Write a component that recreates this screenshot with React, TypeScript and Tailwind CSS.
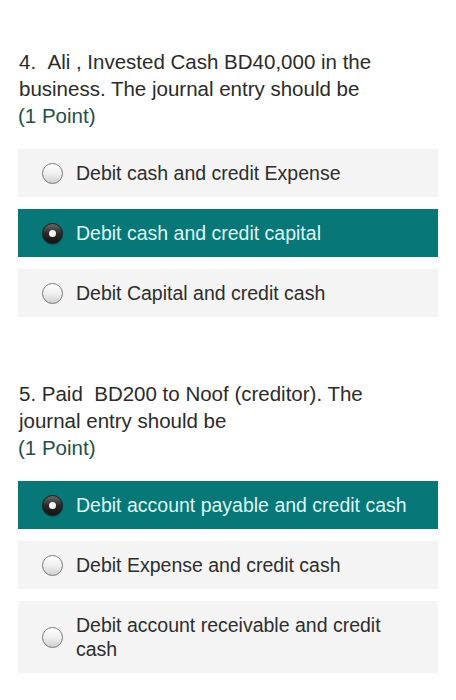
const questions = [
  {
    title: "4.\u00a0\u00a0Ali , Invested Cash BD40,000 in the business. The journal entry should be",
    options: [
      { label: "Debit cash and credit Expense", selected: false },
      { label: "Debit cash and credit capital", selected: true },
      { label: "Debit Capital and credit cash", selected: false },
    ],
  },
  {
    title: "5. Paid\u00a0\u00a0BD200 to Noof (creditor). The journal entry should be",
    options: [
      { label: "Debit account payable and credit cash", selected: true },
      { label: "Debit Expense and credit cash", selected: false },
      { label: "Debit account receivable and credit cash", selected: false },
    ],
  },
];

function Radio({ selected }: { selected: boolean }) {
  if (selected) {
    return (
      <span className="flex h-[21px] w-[21px] shrink-0 items-center justify-center rounded-full border border-[#1a1a1a] bg-gradient-to-b from-[#6a6a6a] via-[#2a2a2a] to-[#111] shadow-[0_1px_1px_rgba(0,0,0,0.3)]">
        <span className="h-[7px] w-[7px] rounded-full bg-[#f2f2f2]" />
      </span>
    );
  }
  return (
    <span className="h-[21px] w-[21px] shrink-0 rounded-full border border-[#7a7a7a] bg-gradient-to-b from-white via-[#f0f0f0] to-[#cfcfcf]" />
  );
}

export default function App() {
  return (
    <div className="min-h-[700px] bg-white px-[18px] pt-[48px] font-['Liberation_Sans',Arial,sans-serif]">
      {questions.map((q, qi) => (
        <section key={qi} className={qi === 0 ? "mb-[63px]" : ""}>
          <h2 className="pl-[1px] pr-[30px] text-[20.5px] leading-[27px] text-[#2b2b2b]">{q.title}</h2>
          <p className="text-[20.5px] leading-[27px] text-[#1d4f4c]">(1 Point)</p>
          <div className="mt-[20px] flex flex-col gap-[12px]">
            {q.options.map((o) => (
              <div
                key={o.label}
                className={
                  "flex min-h-[48px] items-center gap-[13px] py-[12px] pl-[24px] pr-[20px] " +
                  (o.selected ? "bg-[#077778] text-[#dcf6f6]" : "bg-[#f4f4f4] text-[#2e2e2e]")
                }
              >
                <Radio selected={o.selected} />
                <span className="text-[19.5px] leading-[24px]">{o.label}</span>
              </div>
            ))}
          </div>
        </section>
      ))}
    </div>
  );
}
